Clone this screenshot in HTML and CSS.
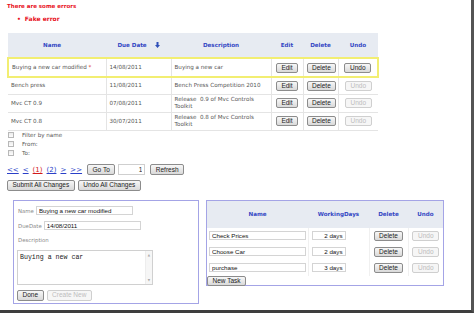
FILE: index.html
```html
<!DOCTYPE html>
<html>
<head>
    <title>To Do List</title>
    <meta charset="UTF-8">
    <link rel="stylesheet" href="styles.css">
</head>
<body>
    <div class="page">
        <div class="errors">
            <div class="err-title">There are some errors</div>
            <ul class="err-list">
                <li>Fake error</li>
            </ul>
        </div>

        <table class="grid">
            <colgroup>
                <col style="width: 98px">
                <col style="width: 65px">
                <col style="width: 100px">
                <col style="width: 32px">
                <col style="width: 35px">
                <col style="width: 40px">
            </colgroup>
            <thead>
                <tr>
                    <th class="name-head">Name</th>
                    <th>Due Date
                        <svg class="sort-icon" width="5" height="6" viewBox="0 0 5 6">
                            <path d="M1.5 0h2v3h1.5L2.5 6 0 3h1.5z" fill="#2f4fb8"/>
                        </svg>
                    </th>
                    <th>Description</th>
                    <th>Edit</th>
                    <th>Delete</th>
                    <th>Undo</th>
                </tr>
            </thead>
            <tbody>
                <tr class="editing">
                    <td>Buying a new car modified <span class="mark">*</span></td>
                    <td>14/08/2011</td>
                    <td>Buying a new car</td>
                    <td class="c"><button class="btn">Edit</button></td>
                    <td class="c"><button class="btn">Delete</button></td>
                    <td class="c"><button class="btn">Undo</button></td>
                </tr>
                <tr>
                    <td>Bench press</td>
                    <td>11/08/2011</td>
                    <td>Bench Press Competition 2010</td>
                    <td class="c"><button class="btn">Edit</button></td>
                    <td class="c"><button class="btn">Delete</button></td>
                    <td class="c"><button class="btn" disabled>Undo</button></td>
                </tr>
                <tr class="tall">
                    <td>Mvc CT 0.9</td>
                    <td>07/08/2011</td>
                    <td>Release&nbsp; 0.9 of Mvc Controls Toolkit</td>
                    <td class="c"><button class="btn">Edit</button></td>
                    <td class="c"><button class="btn">Delete</button></td>
                    <td class="c"><button class="btn" disabled>Undo</button></td>
                </tr>
                <tr class="tall">
                    <td>Mvc CT 0.8</td>
                    <td>30/07/2011</td>
                    <td>Release&nbsp; 0.8 of Mvc Controls Toolkit</td>
                    <td class="c"><button class="btn">Edit</button></td>
                    <td class="c"><button class="btn">Delete</button></td>
                    <td class="c"><button class="btn" disabled>Undo</button></td>
                </tr>
            </tbody>
        </table>

        <div class="filters">
            <label class="filter"><span class="check"></span>Filter by name</label>
            <label class="filter"><span class="check"></span>From:</label>
            <label class="filter"><span class="check"></span>To:</label>
        </div>

        <div class="pager">
            <a class="plink">&lt;&lt;</a>
            <a class="plink">&lt;</a>
            <a class="plink current">(1)</a>
            <a class="plink">(2)</a>
            <a class="plink">&gt;</a>
            <a class="plink">&gt;&gt;</a>
            <button class="btn">Go To</button>
            <input class="page-input" type="text" value="1">
            <button class="btn">Refresh</button>
        </div>

        <div class="actions">
            <button class="btn">Submit All Changes</button>
            <button class="btn">Undo All Changes</button>
        </div>

        <div class="panels">
            <div class="panel edit-panel">
                <div class="field">
                    <span class="lbl">Name</span>
                    <input class="txt name-input" type="text" value="Buying a new car modified">
                </div>
                <div class="field">
                    <span class="lbl">DueDate</span>
                    <input class="txt name-input" type="text" value="14/08/2011">
                </div>
                <div class="lbl desc-lbl">Description</div>
                <div class="textarea">
                    <div class="textarea-text">Buying a new car</div>
                    <div class="scrollbar">
                        <span class="arrow">&#9650;</span>
                        <span class="arrow">&#9660;</span>
                    </div>
                </div>
                <div class="panel-buttons">
                    <button class="btn">Done</button>
                    <button class="btn" disabled>Create New</button>
                </div>
            </div>

            <div class="panel tasks-panel">
                <table class="tasks">
                    <colgroup>
                        <col style="width: 101px">
                        <col style="width: 61px">
                        <col style="width: 39px">
                        <col style="width: 35px">
                    </colgroup>
                    <thead>
                        <tr>
                            <th>Name</th>
                            <th>WorkingDays</th>
                            <th>Delete</th>
                            <th>Undo</th>
                        </tr>
                    </thead>
                    <tbody>
                        <tr>
                            <td><input class="txt task-name" type="text" value="Check Prices"></td>
                            <td><input class="txt days" type="text" value="2 days"></td>
                            <td class="c"><button class="btn">Delete</button></td>
                            <td class="c"><button class="btn" disabled>Undo</button></td>
                        </tr>
                        <tr>
                            <td><input class="txt task-name" type="text" value="Choose Car"></td>
                            <td><input class="txt days" type="text" value="2 days"></td>
                            <td class="c"><button class="btn">Delete</button></td>
                            <td class="c"><button class="btn" disabled>Undo</button></td>
                        </tr>
                        <tr>
                            <td><input class="txt task-name" type="text" value="purchase"></td>
                            <td><input class="txt days" type="text" value="3 days"></td>
                            <td class="c"><button class="btn">Delete</button></td>
                            <td class="c"><button class="btn" disabled>Undo</button></td>
                        </tr>
                    </tbody>
                </table>
                <button class="btn new-task">New Task</button>
            </div>
        </div>
    </div>
</body>
</html>
```

FILE: styles.css
```css
:root {
    --head-bg: #e7ebf2;
    --head-text: #3448c4;
    --cell-text: #555;
    --line: #e4e4e4;
    --panel-border: #a4a4e6;
    --error: #e8101c;
}

* {
    margin: 0;
    padding: 0;
    box-sizing: border-box;
}

body {
    background: #fff;
    width: 474px;
    height: 313px;
    overflow: hidden;
    font-family: 'DejaVu Sans', Verdana, sans-serif;
}

.page {
    width: 474px;
    height: 313px;
    padding: 2px 0 0 7px;
    border-right: 3px solid #545454;
    border-bottom: 3px solid #3e3e3e;
    color: var(--cell-text);
    font-size: 5.6px;
}

/* errors */
.err-title {
    color: var(--error);
    font-weight: bold;
    font-size: 5.5px;
    line-height: 8px;
}

.err-list {
    list-style: none;
    margin-top: 5px;
    padding-left: 10px;
    color: var(--error);
    font-weight: bold;
    font-size: 6px;
    line-height: 8px;
}

.err-list li::before {
    content: "\2022";
    margin-right: 4px;
}

/* main grid */
.grid {
    margin-top: 10px;
    width: 370px;
    border-collapse: collapse;
    table-layout: fixed;
}

.grid th {
    background: var(--head-bg);
    color: var(--head-text);
    font-weight: bold;
    height: 25px;
    font-size: 5.6px;
}

.grid th.name-head {
    padding-right: 10px;
}

.sort-icon {
    margin-left: 6px;
    vertical-align: -1px;
}

.grid td {
    height: 17px;
    padding: 0 3px;
    border: 1px solid var(--line);
    line-height: 7px;
    vertical-align: middle;
}

.grid tr.tall td {
    height: 18px;
}

.grid td:first-child { border-left: none; }
.grid td:last-child { border-right: none; }

.grid tr.editing td {
    height: 19px;
    border-top: 2px solid #f2ee72;
    border-bottom: 2px solid #f2ee72;
}

.grid tr.editing td:first-child { border-left: 2px solid #f2ee72; }
.grid tr.editing td:last-child { border-right: 2px solid #f2ee72; }

.mark {
    color: #d33;
}

.c {
    text-align: center;
}

.btn {
    font-family: 'Liberation Sans', Arial, sans-serif;
    font-size: 6.5px;
    height: 10px;
    line-height: 8px;
    padding: 0 4.5px;
    color: #222;
    border: 1px solid #8c8c8c;
    border-radius: 2px;
    background: linear-gradient(#f7f7f7, #d9d9d9);
}

.btn:disabled {
    color: #bdbdbd;
    border-color: #cfcfcf;
    background: #f6f6f6;
}

/* filters */
.filter {
    display: flex;
    align-items: center;
    height: 9px;
    padding-left: 1px;
}

.check {
    width: 6px;
    height: 6px;
    margin-right: 8px;
    border: 1px solid #b8b8b8;
    background: linear-gradient(#ececec, #fdfdfd);
}

/* pager */
.pager {
    display: flex;
    align-items: center;
    margin-top: 6px;
    height: 12px;
}

.plink {
    color: #2a3fc8;
    text-decoration: underline;
    font-size: 7px;
    margin-right: 4px;
}

.plink.current {
    color: #d21a1a;
}

.pager .btn {
    height: 11px;
    margin-left: 1px;
}

.page-input {
    width: 27px;
    height: 11px;
    margin: 0 4px 0 3px;
    border: 1px solid #cfcfcf;
    font-family: 'Liberation Sans', Arial, sans-serif;
    font-size: 6.5px;
    text-align: right;
    padding-right: 2px;
    color: #222;
}

/* actions */
.actions {
    display: flex;
    gap: 3px;
    margin-top: 4px;
}

.actions .btn {
    height: 11px;
}

/* panels */
.panels {
    display: flex;
    align-items: flex-start;
    gap: 7px;
    margin-top: 9px;
    margin-left: 6px;
}

.panel {
    border: 1px solid var(--panel-border);
    background: #fff;
}

.edit-panel {
    width: 186px;
    height: 104px;
    padding: 5px 3px 5px 2px;
}

.field {
    display: flex;
    align-items: center;
    height: 10px;
    margin-bottom: 5px;
    padding-left: 2px;
}

.lbl {
    color: #8a8a8a;
    font-size: 5.4px;
    margin-right: 2px;
}

.txt {
    border: 1px solid #d4d4d4;
    height: 9px;
    font-family: 'Liberation Sans', Arial, sans-serif;
    font-size: 6.2px;
    color: #111;
    padding: 0 2px;
}

.name-input {
    width: 97px;
}

.desc-lbl {
    padding-left: 2px;
    line-height: 8px;
    margin-bottom: 6px;
}

.textarea {
    display: flex;
    width: 136px;
    height: 35px;
    margin-left: 1px;
    border: 1px solid #d0d0d0;
}

.textarea-text {
    flex: 1;
    padding: 3px 2px;
    font-family: 'Liberation Mono', 'Courier New', monospace;
    font-size: 6.6px;
    color: #222;
}

.scrollbar {
    width: 7px;
    display: flex;
    flex-direction: column;
    justify-content: space-between;
    align-items: center;
    background: #f6f6f6;
    border-left: 1px solid #ededed;
    color: #a8a8a8;
    font-size: 3px;
    padding: 2px 0;
}

.panel-buttons {
    display: flex;
    gap: 3px;
    margin-top: 5px;
    margin-left: 1px;
}

.panel-buttons .btn {
    height: 11px;
}

.tasks-panel {
    width: 238px;
    height: 86px;
}

.tasks {
    width: 236px;
    border-collapse: collapse;
    table-layout: fixed;
}

.tasks th {
    background: var(--head-bg);
    color: var(--head-text);
    font-weight: bold;
    height: 27px;
    font-size: 5.6px;
}

.tasks td {
    height: 16px;
    padding: 0 1px;
    vertical-align: middle;
    border-left: 1px solid #f0f0f0;
}

.tasks td:first-child {
    border-left: none;
}

.task-name {
    width: 97px;
    margin-left: 1px;
}

.days {
    width: 34px;
    margin-left: 2px;
    text-align: right;
}

.new-task {
    display: block;
    height: 10px;
}
```
